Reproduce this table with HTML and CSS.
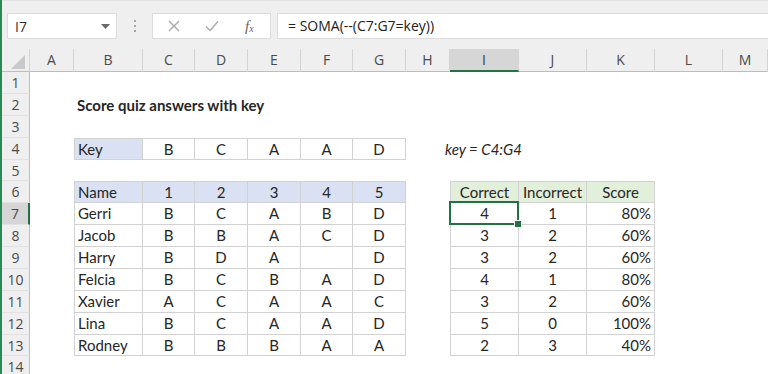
FILE: index.html
```html
<!DOCTYPE html>
<html>
<head>
<meta charset="utf-8">
<link rel="stylesheet" href="styles.css">
</head>
<body>
<div class="app">
  <div class="fbar">
    <div class="namebox">
      <span>I7</span>
      <svg class="dd" width="9" height="5" viewBox="0 0 9 5"><polygon points="0,0 9,0 4.5,5" fill="#6a6a6a"/></svg>
    </div>
    <div class="dots"><i></i><i></i><i></i></div>
    <div class="btns">
      <svg width="12" height="12" viewBox="0 0 12 12"><path d="M1 1L11 11M11 1L1 11" stroke="#a8a8a8" stroke-width="1.4" fill="none"/></svg>
      <svg width="14" height="12" viewBox="0 0 14 12"><path d="M1 6.5L5 10.5L13 1.5" stroke="#a8a8a8" stroke-width="1.4" fill="none"/></svg>
      <span class="fx">f<sub>x</sub></span>
    </div>
    <div class="formula">= SOMA(--(C7:G7=key))</div>
  </div>

  <div class="sheet">
    <div class="corner"><svg width="14" height="14" viewBox="0 0 14 14"><polygon points="14,0 14,14 0,14" fill="#c9c9c9"/></svg></div>
    <div class="ch">A</div><div class="ch">B</div><div class="ch">C</div><div class="ch">D</div><div class="ch">E</div><div class="ch">F</div><div class="ch">G</div><div class="ch">H</div><div class="ch on">I</div><div class="ch">J</div><div class="ch">K</div><div class="ch">L</div><div class="ch">M</div>

    <div class="rh">1</div><div class="all"></div>

    <div class="rh">2</div><div></div><div class="title">Score quiz answers with key</div>

    <div class="rh">3</div><div class="all"></div>

    <div class="rh">4</div><div></div>
    <div class="t tt tl key">Key</div><div class="t tt c">B</div><div class="t tt c">C</div><div class="t tt c">A</div><div class="t tt c">A</div><div class="t tt c">D</div>
    <div class="note">key = C4:G4</div>

    <div class="rh">5</div><div class="all"></div>

    <div class="rh">6</div><div></div>
    <div class="t tt tl hb">Name</div><div class="t tt hb c">1</div><div class="t tt hb c">2</div><div class="t tt hb c">3</div><div class="t tt hb c">4</div><div class="t tt hb c">5</div>
    <div></div>
    <div class="t tt tl hg c">Correct</div><div class="t tt hg c">Incorrect</div><div class="t tt hg c">Score</div>
    <div class="rest"></div>

    <div class="rh on">7</div><div></div>
    <div class="t tl">Gerri</div><div class="t c">B</div><div class="t c">C</div><div class="t c">A</div><div class="t c">B</div><div class="t c">D</div>
    <div></div>
    <div class="t tl c sel">4</div><div class="t c">1</div><div class="t r">80%</div>
    <div class="rest"></div>

    <div class="rh">8</div><div></div>
    <div class="t tl">Jacob</div><div class="t c">B</div><div class="t c">B</div><div class="t c">A</div><div class="t c">C</div><div class="t c">D</div>
    <div></div>
    <div class="t tl c">3</div><div class="t c">2</div><div class="t r">60%</div>
    <div class="rest"></div>

    <div class="rh">9</div><div></div>
    <div class="t tl">Harry</div><div class="t c">B</div><div class="t c">D</div><div class="t c">A</div><div class="t c"></div><div class="t c">D</div>
    <div></div>
    <div class="t tl c">3</div><div class="t c">2</div><div class="t r">60%</div>
    <div class="rest"></div>

    <div class="rh">10</div><div></div>
    <div class="t tl">Felcia</div><div class="t c">B</div><div class="t c">C</div><div class="t c">B</div><div class="t c">A</div><div class="t c">D</div>
    <div></div>
    <div class="t tl c">4</div><div class="t c">1</div><div class="t r">80%</div>
    <div class="rest"></div>

    <div class="rh">11</div><div></div>
    <div class="t tl">Xavier</div><div class="t c">A</div><div class="t c">C</div><div class="t c">A</div><div class="t c">A</div><div class="t c">C</div>
    <div></div>
    <div class="t tl c">3</div><div class="t c">2</div><div class="t r">60%</div>
    <div class="rest"></div>

    <div class="rh">12</div><div></div>
    <div class="t tl">Lina</div><div class="t c">B</div><div class="t c">C</div><div class="t c">A</div><div class="t c">A</div><div class="t c">D</div>
    <div></div>
    <div class="t tl c">5</div><div class="t c">0</div><div class="t r">100%</div>
    <div class="rest"></div>

    <div class="rh">13</div><div></div>
    <div class="t tl">Rodney</div><div class="t c">B</div><div class="t c">B</div><div class="t c">B</div><div class="t c">A</div><div class="t c">A</div>
    <div></div>
    <div class="t tl c">2</div><div class="t c">3</div><div class="t r">40%</div>
    <div class="rest"></div>

    <div class="rh">14</div><div class="all"></div>
  </div>
</div>
</body>
</html>
```
FILE: styles.css
```css
* { box-sizing: border-box; }
html, body { margin: 0; padding: 0; }
body { width: 768px; height: 374px; overflow: hidden; background: #fff; }

.app {
  border-left: 2px solid #2a8a55;
  height: 374px;
  overflow: hidden;
  font-family: "Open Sans", "Noto Sans", sans-serif;
}

/* formula bar */
.fbar {
  height: 49px;
  background: #efefef;
  display: flex;
  align-items: flex-start;
  padding: 12px 0 0 5px;
  border-top: 1px solid #e2e2e2;
}
.namebox {
  width: 110px;
  height: 26px;
  background: #fff;
  border: 1px solid #dcdcdc;
  display: flex;
  align-items: center;
  justify-content: space-between;
  padding: 0 6px 0 7px;
  font-size: 14px;
  color: #333;
}
.dots {
  width: 35px;
  height: 26px;
  display: flex;
  flex-direction: column;
  align-items: center;
  justify-content: center;
  gap: 3px;
}
.dots i { width: 2px; height: 2px; background: #a6a6a6; display: block; }
.btns {
  width: 119px;
  height: 26px;
  background: #fff;
  border: 1px solid #dcdcdc;
  display: flex;
  align-items: center;
  padding-left: 15px;
  gap: 0;
}
.btns svg:first-child { margin-right: 25px; }
.btns svg:nth-child(2) { margin-right: 26px; }
.fx {
  font-family: "Liberation Serif", "DejaVu Serif", serif;
  font-style: italic;
  font-size: 15px;
  color: #666;
  line-height: 1;
}
.fx sub { font-size: 10px; vertical-align: -1px; }
.formula {
  flex: 1;
  margin-left: 6px;
  height: 26px;
  background: #fff;
  border: 1px solid #dcdcdc;
  border-right: none;
  padding-left: 10px;
  font-size: 14px;
  line-height: 24px;
  color: #222;
  white-space: nowrap;
}

/* sheet */
.sheet {
  display: grid;
  grid-template-columns: 28px 44px 69px 52px 53px 53px 52px 53px 44px 69px 68px 68px 68px 1fr;
  grid-template-rows: 23px repeat(14, 21.875px);
  height: 325px;
  overflow: hidden;
  background: #fff;
  font-family: "Lato", "Open Sans", sans-serif;
  font-size: 15px;
  color: #262626;
}
.corner {
  background: #efefef;
  border-right: 1px solid #d4d4d4;
  border-bottom: 1px solid #bcbcbc;
  display: flex;
  align-items: flex-end;
  justify-content: flex-end;
  padding: 0 4px 2px 0;
}
.ch {
  background: #efefef;
  border-right: 1px solid #d4d4d4;
  border-bottom: 1px solid #bcbcbc;
  font-family: "Open Sans", "Noto Sans", sans-serif;
  font-size: 14px;
  color: #4a4a4a;
  text-align: center;
  line-height: 22px;
}
.ch.on {
  background: #d6d6d6;
  border-bottom: 2px solid #217346;
  color: #3a3a3a;
}
.rh {
  background: #efefef;
  border-right: 1px solid #bcbcbc;
  border-bottom: 1px solid #e2e2e2;
  font-family: "Open Sans", "Noto Sans", sans-serif;
  font-size: 14px;
  color: #4a4a4a;
  text-align: center;
  line-height: 21px;
}
.rh.on {
  background: #d6d6d6;
  border-right: 2px solid #217346;
}
.all { grid-column: span 13; }
.rest { grid-column: span 2; }
.title {
  grid-column: span 12;
  font-weight: bold;
  padding-left: 3px;
  line-height: 22px;
  white-space: nowrap;
}
.note {
  grid-column: span 6;
  font-style: italic;
  padding-left: 39px;
  line-height: 22px;
  white-space: nowrap;
}

/* table cells */
.t {
  border-right: 1px solid #d2d2d2;
  border-bottom: 1px solid #d2d2d2;
  padding: 0 3px;
  line-height: 21px;
  white-space: nowrap;
}
.tt { border-top: 1px solid #d2d2d2; line-height: 20px; }
.tl { border-left: 1px solid #d2d2d2; }
.c { text-align: center; }
.r { text-align: right; }
.key, .hb { background: #d9e1f2; }
.hg { background: #e2efda; }

.sel { position: relative; }
.sel::after {
  content: "";
  position: absolute;
  left: -2px;
  top: -2px;
  right: -1px;
  bottom: -1px;
  border: 2px solid #217346;
}
.sel::before {
  content: "";
  position: absolute;
  right: -4px;
  bottom: -4px;
  width: 6px;
  height: 6px;
  background: #217346;
  border: 1px solid #fff;
  z-index: 2;
}
```
